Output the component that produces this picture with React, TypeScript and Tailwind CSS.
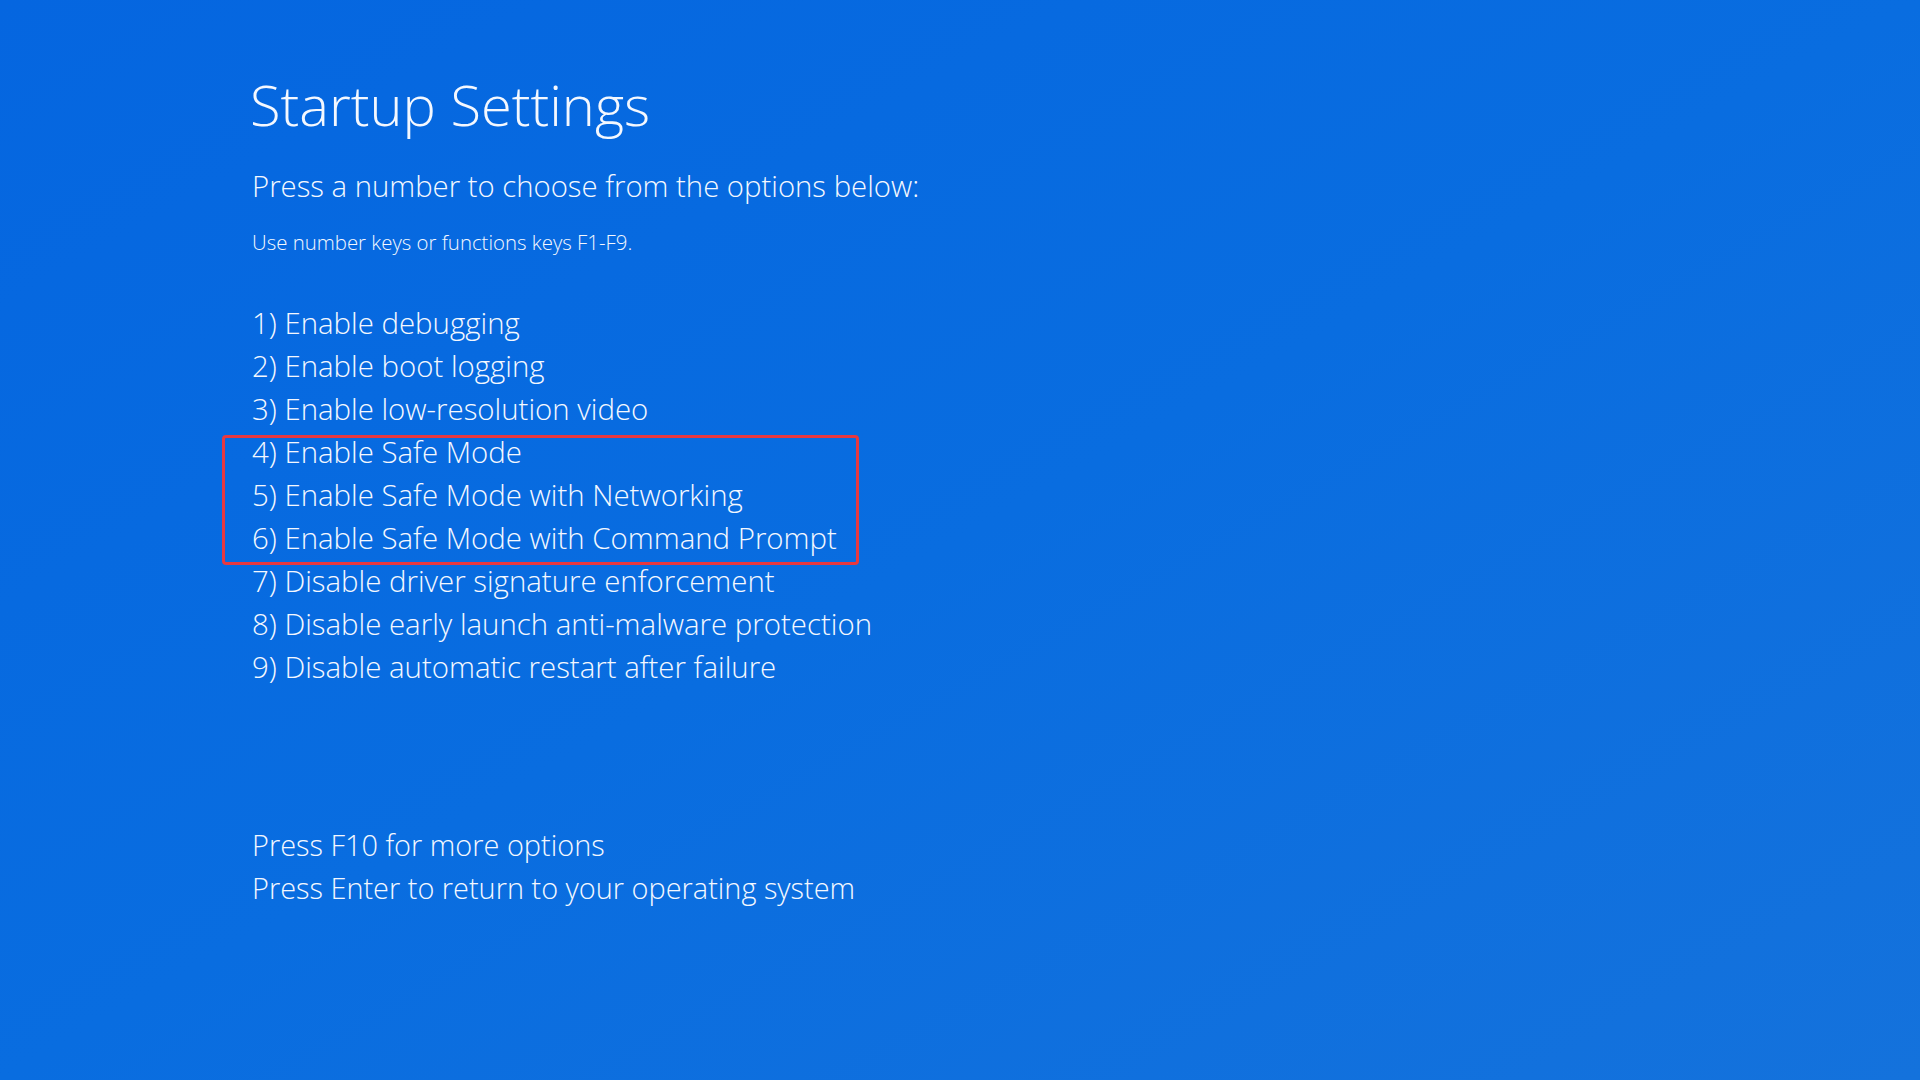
import React from "react";

const options = [
  "1) Enable debugging",
  "2) Enable boot logging",
  "3) Enable low-resolution video",
];
const safe = [
  "4) Enable Safe Mode",
  "5) Enable Safe Mode with Networking",
  "6) Enable Safe Mode with Command Prompt",
];
const rest = [
  "7) Disable driver signature enforcement",
  "8) Disable early launch anti-malware protection",
  "9) Disable automatic restart after failure",
];

export default function App() {
  return (
    <div
      className="w-[1920px] h-[1080px] overflow-hidden bg-gradient-to-br from-[#0566e0] via-[#096de0] to-[#1472dc] text-[#f4f8ff] font-light"
      style={{ fontFamily: '"Open Sans", "Noto Sans", sans-serif' }}
    >
      <div className="pl-[250px] pt-[72px]">
        <h1 className="text-[56px] leading-[64px] font-light">Startup Settings</h1>
        <p className="mt-[30px] pl-[2px] text-[29.3px] leading-[40px]">
          Press a number to choose from the options below:
        </p>
        <p className="mt-[24px] pl-[2px] text-[20.4px] leading-[24px]">
          Use number keys or functions keys F1-F9.
        </p>
        <div className="mt-[48px] pl-[2px] text-[29.4px] leading-[43px]">
          {options.map((o) => (
            <div key={o}>{o}</div>
          ))}
          <div className="relative">
            <div className="absolute left-[-30px] top-[4px] bottom-[-5px] w-[637px] rounded-[4px] border-[3px] border-[#e8383f]" />
            {safe.map((o) => (
              <div key={o}>{o}</div>
            ))}
          </div>
          {rest.map((o) => (
            <div key={o}>{o}</div>
          ))}
        </div>
        <div className="mt-[134px] pl-[2px] text-[28.9px] leading-[43px]">
          <div>Press F10 for more options</div>
          <div>Press Enter to return to your operating system</div>
        </div>
      </div>
    </div>
  );
}
